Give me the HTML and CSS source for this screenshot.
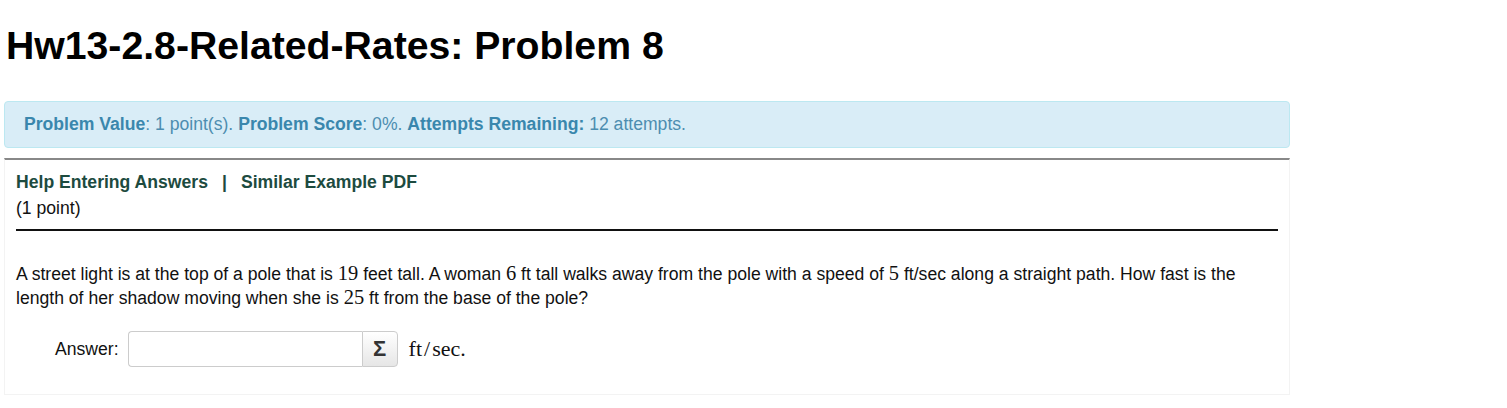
FILE: index.html
```html
<!DOCTYPE html>
<html>
<head>
<meta charset="utf-8">
<link rel="stylesheet" href="styles.css">
</head>
<body>
<h1 class="title">Hw13-2.8-Related-Rates: Problem 8</h1>
<div class="info">
  <b>Problem Value</b>: 1 point(s). <b>Problem Score</b>: 0%. <b>Attempts Remaining:</b> 12 attempts.
</div>
<div class="problem">
  <div class="links"><a>Help Entering Answers</a><span class="sep">|</span><a>Similar Example PDF</a></div>
  <div class="points">(1 point)</div>
  <div class="rule"></div>
  <p class="text">A street light is at the top of a pole that is <span class="m">19</span> feet tall. A woman <span class="m">6</span> ft tall walks away from the pole with a speed of <span class="m">5</span> ft/sec along a straight path. How fast is the length of her shadow moving when she is <span class="m">25</span> ft from the base of the pole?</p>
  <div class="answer">
    <span class="label">Answer:</span>
    <div class="group">
      <input class="field" type="text">
      <span class="sigma">&Sigma;</span>
    </div>
    <span class="unit">ft<span class="slash">/</span>sec.</span>
  </div>
</div>
</body>
</html>
```
FILE: styles.css
```css
html, body { margin: 0; padding: 0; background: #fff; }
body { font-family: "Liberation Sans", Arial, sans-serif; color: #222; padding: 0 4px; width: 1286px; }
.title { margin: 0; padding: 24px 0 0 2px; font-size: 39.2px; line-height: 44px; font-weight: bold; color: #000; height: 79px; box-sizing: border-box; white-space: nowrap; }
.info { margin-top: 22px; height: 47px; box-sizing: border-box; background: #d9edf7; border: 1px solid #bce8f1; border-radius: 4px; color: #4d8db0; font-size: 17.6px; padding: 0 19px; display: flex; align-items: center; white-space: pre; }
.info b { font-weight: bold; color: #3a87ad; }
.problem { margin-top: 10px; border-top: 2px solid #888; border-left: 1px solid #f3f3f3; border-right: 1px solid #f3f3f3; border-bottom: 1px solid #f3f3f3; padding: 12px 11px 0 11px; height: 237px; box-sizing: border-box; }
.links { font-size: 17.6px; font-weight: bold; color: #1d4b3f; line-height: 20px; display: flex; white-space: nowrap; }
.links .sep { padding: 0 14px 0 14px; color: #1d4b3f; }
.points { font-size: 17.6px; line-height: 20px; margin-top: 6px; color: #111; }
.rule { height: 2px; background: #111; margin-top: 11px; }
.text { margin: 31px 0 0 0; font-size: 17.6px; line-height: 24px; color: #111; }
.m { font-family: "Liberation Serif", "DejaVu Serif", serif; font-size: 20.5px; line-height: 1; }
.answer { display: flex; align-items: center; margin-top: 21px; padding-left: 39px; }
.label { font-size: 17.6px; color: #111; margin-right: 9px; }
.group { display: flex; height: 36px; }
.field { width: 234px; height: 36px; box-sizing: border-box; margin: 0; border: 1px solid #ccc; border-right: none; border-radius: 4px 0 0 4px; padding: 0 8px; font-size: 16px; }
.sigma { width: 36px; height: 36px; box-sizing: border-box; border: 1px solid #ccc; border-radius: 0 4px 4px 0; background: linear-gradient(#fff, #e6e6e6); display: flex; align-items: center; justify-content: center; font-weight: bold; font-size: 22px; color: #333; }
.unit { font-family: "Liberation Serif", "DejaVu Serif", serif; font-size: 22px; color: #111; margin-left: 11px; }
.slash { margin: 0 2px; }
```
